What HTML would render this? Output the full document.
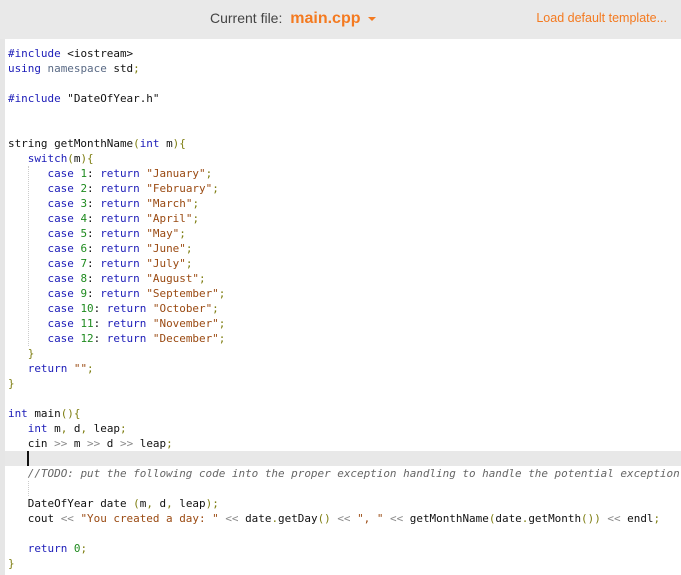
<!DOCTYPE html>
<html><head><meta charset="utf-8"><style>
body{margin:0;width:681px;height:575px;overflow:hidden;background:#fff;font-family:"Liberation Sans",sans-serif;position:relative}
.hdr{position:absolute;left:0;top:0;width:681px;height:39px;background:#e9e9e9}
.cf{position:absolute;left:210px;top:10px;font-size:14px;color:#444}
.cf b{color:#f47a20;font-size:16px;font-weight:bold;margin-left:4px}
.tri{display:inline-block;width:0;height:0;border-left:4px solid transparent;border-right:4px solid transparent;border-top:4px solid #f47a20;margin-left:8px;vertical-align:middle}
.ld{position:absolute;right:14px;top:11px;font-size:12.5px;color:#f47a20}
.gut{position:absolute;left:0;top:39px;width:5px;height:536px;background:#e6e6e6}
.hl{position:absolute;left:5px;top:451px;width:676px;height:15px;background:#e8e8e8}
.cur{position:absolute;left:27px;top:451px;width:2px;height:15px;background:#111}
pre{position:absolute;left:8px;top:46px;margin:0;font-family:"DejaVu Sans Mono","Liberation Mono",monospace;font-size:10.95px;line-height:15px;color:#111}
.k{color:#1c1cb8}.s{color:#9a4a12}.n{color:#1e8a1e}.p{color:#7d7d10}.g{color:#5a6a85}.c{color:#666;font-style:italic}.o{color:#8a8a8a}
.guide{position:absolute;width:0;border-left:1px dotted #ccc}
</style></head><body>
<div class="hdr"><div class="cf">Current file: <b>main.cpp</b><span class="tri"></span></div><div class="ld">Load default template...</div></div>
<div class="gut"></div>
<div class="hl"></div>
<div class="guide" style="left:28px;top:166px;height:180px"></div>
<div class="guide" style="left:28px;top:481px;height:15px"></div>
<div class="cur"></div>
<pre><span class="k">#include</span> &lt;iostream&gt;
<span class="k">using</span> <span class="g">namespace</span> std<span class="p">;</span>

<span class="k">#include</span> "DateOfYear.h"


string getMonthName<span class="p">(</span><span class="k">int</span> m<span class="p">){</span>
   <span class="k">switch</span><span class="p">(</span>m<span class="p">){</span>
      <span class="k">case</span> <span class="n">1</span>: <span class="k">return</span> <span class="s">"January"</span><span class="p">;</span>
      <span class="k">case</span> <span class="n">2</span>: <span class="k">return</span> <span class="s">"February"</span><span class="p">;</span>
      <span class="k">case</span> <span class="n">3</span>: <span class="k">return</span> <span class="s">"March"</span><span class="p">;</span>
      <span class="k">case</span> <span class="n">4</span>: <span class="k">return</span> <span class="s">"April"</span><span class="p">;</span>
      <span class="k">case</span> <span class="n">5</span>: <span class="k">return</span> <span class="s">"May"</span><span class="p">;</span>
      <span class="k">case</span> <span class="n">6</span>: <span class="k">return</span> <span class="s">"June"</span><span class="p">;</span>
      <span class="k">case</span> <span class="n">7</span>: <span class="k">return</span> <span class="s">"July"</span><span class="p">;</span>
      <span class="k">case</span> <span class="n">8</span>: <span class="k">return</span> <span class="s">"August"</span><span class="p">;</span>
      <span class="k">case</span> <span class="n">9</span>: <span class="k">return</span> <span class="s">"September"</span><span class="p">;</span>
      <span class="k">case</span> <span class="n">10</span>: <span class="k">return</span> <span class="s">"October"</span><span class="p">;</span>
      <span class="k">case</span> <span class="n">11</span>: <span class="k">return</span> <span class="s">"November"</span><span class="p">;</span>
      <span class="k">case</span> <span class="n">12</span>: <span class="k">return</span> <span class="s">"December"</span><span class="p">;</span>
   <span class="p">}</span>
   <span class="k">return</span> <span class="s">""</span><span class="p">;</span>
<span class="p">}</span>

<span class="k">int</span> main<span class="p">(){</span>
   <span class="k">int</span> m<span class="p">,</span> d<span class="p">,</span> leap<span class="p">;</span>
   cin <span class="o">&gt;&gt;</span> m <span class="o">&gt;&gt;</span> d <span class="o">&gt;&gt;</span> leap<span class="p">;</span>

   <span class="c">//TODO: put the following code into the proper exception handling to handle the potential exception</span>

   DateOfYear date <span class="p">(</span>m<span class="p">,</span> d<span class="p">,</span> leap<span class="p">);</span>
   cout <span class="o">&lt;&lt;</span> <span class="s">"You created a day: "</span> <span class="o">&lt;&lt;</span> date<span class="p">.</span>getDay<span class="p">()</span> <span class="o">&lt;&lt;</span> <span class="s">", "</span> <span class="o">&lt;&lt;</span> getMonthName<span class="p">(</span>date<span class="p">.</span>getMonth<span class="p">())</span> <span class="o">&lt;&lt;</span> endl<span class="p">;</span>

   <span class="k">return</span> <span class="n">0</span><span class="p">;</span>
<span class="p">}</span></pre>
</body></html>
